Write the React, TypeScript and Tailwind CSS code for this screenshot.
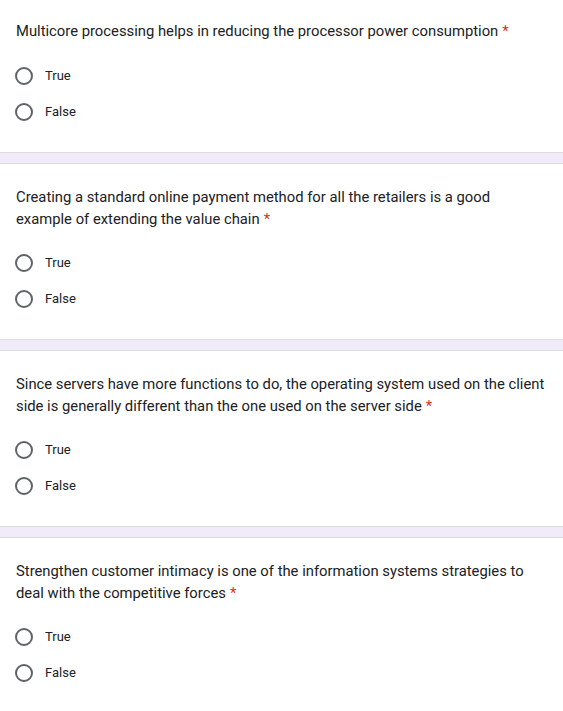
import React from "react";

const questions: string[][] = [
  ["Multicore processing helps in reducing the processor power consumption"],
  [
    "Creating a standard online payment method for all the retailers is a good",
    "example of extending the value chain",
  ],
  [
    "Since servers have more functions to do, the operating system used on the client",
    "side is generally different than the one used on the server side",
  ],
  [
    "Strengthen customer intimacy is one of the information systems strategies to",
    "deal with the competitive forces",
  ],
];

function Option({ label }: { label: string }) {
  return (
    <div className="flex items-center h-[36px]">
      <div className="w-[18px] h-[18px] rounded-full border-2 border-[#5f6368] ml-[15px] shrink-0" />
      <span className="ml-[12px] text-[13px] text-[#202124]" style={{ fontFamily: "Roboto, sans-serif" }}>
        {label}
      </span>
    </div>
  );
}

function Card({ lines, first }: { lines: string[]; first?: boolean }) {
  return (
    <div className={first ? "pt-[20px] pb-[22px]" : "pt-[22px] pb-[22px]"}>
      <div
        className="px-[16px] text-[14.8px] leading-[22.5px] text-[#202124] whitespace-nowrap"
        style={{ fontFamily: "Roboto, sans-serif" }}
      >
        {lines.map((l, i) => (
          <div key={i}>
            {l}
            {i === lines.length - 1 && <span className="text-[#d93025] ml-[4px]">*</span>}
          </div>
        ))}
      </div>
      <div className={first ? "mt-[15px]" : "mt-[14px]"}>
        <Option label="True" />
        <Option label="False" />
      </div>
    </div>
  );
}

export default function App() {
  return (
    <div className="w-[563px] h-[711px] bg-white overflow-hidden">
      {questions.map((q, i) => (
        <div key={i}>
          <Card lines={q} first={i === 0} />
          {i < questions.length - 1 && (
            <div className="h-[12px] bg-[#efebf9] border-y border-[#dadce0]" />
          )}
        </div>
      ))}
    </div>
  );
}
